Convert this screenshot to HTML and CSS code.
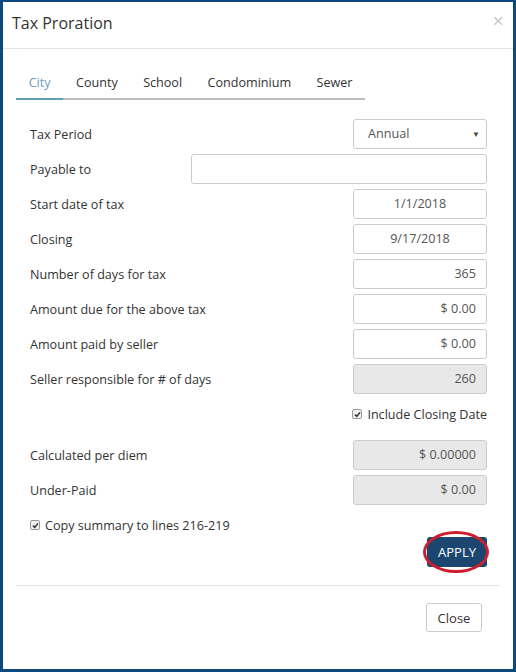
FILE: index.html
```html
<!DOCTYPE html>
<html lang="en">
<head>
    <meta charset="UTF-8">
    <title>Tax Proration</title>
    <link rel="stylesheet" href="styles.css">
</head>
<body>
    <div class="modal">
        <div class="modal-header">
            <h4 class="modal-title">Tax Proration</h4>
            <span class="close-x">&times;</span>
        </div>

        <div class="modal-body">
            <ul class="tabs">
                <li class="active">City</li>
                <li>County</li>
                <li>School</li>
                <li>Condominium</li>
                <li>Sewer</li>
            </ul>

            <div class="form">
                <div class="row">
                    <label>Tax Period</label>
                    <div class="field select"><span>Annual</span><span class="arrow">&#9660;</span></div>
                </div>
                <div class="row">
                    <label>Payable to</label>
                    <div class="field wide"></div>
                </div>
                <div class="row">
                    <label>Start date of tax</label>
                    <div class="field center">1/1/2018</div>
                </div>
                <div class="row">
                    <label>Closing</label>
                    <div class="field center">9/17/2018</div>
                </div>
                <div class="row">
                    <label>Number of days for tax</label>
                    <div class="field">365</div>
                </div>
                <div class="row">
                    <label>Amount due for the above tax</label>
                    <div class="field">$ 0.00</div>
                </div>
                <div class="row">
                    <label>Amount paid by seller</label>
                    <div class="field">$ 0.00</div>
                </div>
                <div class="row">
                    <label>Seller responsible for # of days</label>
                    <div class="field readonly">260</div>
                </div>

                <div class="check-row closing">
                    <span class="tick"><svg width="7" height="7" viewBox="0 0 7 7"><path d="M1 3.6 L2.8 5.4 L6 1.4" fill="none" stroke="#333" stroke-width="1.5"/></svg></span>
                    Include Closing Date
                </div>

                <div class="row">
                    <label>Calculated per diem</label>
                    <div class="field readonly">$ 0.00000</div>
                </div>
                <div class="row">
                    <label>Under-Paid</label>
                    <div class="field readonly">$ 0.00</div>
                </div>

                <div class="check-row copy">
                    <span class="tick"><svg width="7" height="7" viewBox="0 0 7 7"><path d="M1 3.6 L2.8 5.4 L6 1.4" fill="none" stroke="#333" stroke-width="1.5"/></svg></span>
                    Copy summary to lines 216-219
                </div>

                <div class="apply-row">
                    <button class="btn-apply">APPLY</button>
                </div>
            </div>

            <div class="modal-footer">
                <button class="btn-close">Close</button>
            </div>
        </div>
    </div>
</body>
</html>
```

FILE: styles.css
```css
/* tax proration dialog */
body {
    margin: 0;
    padding: 0;
    font-family: "Open Sans", Arial, sans-serif;
    font-size: 12.6px;
    color: #333;
    background: #fff;
}
.modal {
    box-sizing: border-box;
    width: 516px;
    height: 672px;
    border: 3px solid #0c4a7d;
    border-top-width: 2px;
    background: #fff;
}

.modal-header {
    height: 46px;
    padding: 0 9px 0 9px;
    display: flex;
    align-items: center;
    justify-content: space-between;
    border-bottom: 1px solid #e5e5e5;
}
.modal-title {
    margin: 0 0 4px 0;
    font-size: 16px;
    font-weight: 400;
    color: #333;
}
.close-x {
    font-size: 20px;
    color: #c8c8c8;
    line-height: 1;
    margin-top: -8px;
}

.modal-body {
    padding: 17px 13px 0 13px;
}

.tabs {
    list-style: none;
    margin: 0;
    padding: 0;
    display: inline-flex;
    border-bottom: 2px solid #bbb;
}
.tabs li {
    padding: 8px 12.7px 6px 12.7px;
    line-height: 18px;
    color: #333;
    margin-bottom: -2px;
    border-bottom: 2px solid transparent;
}
.tabs li.active {
    color: #6d9ac0;
    border-bottom-color: #5f9db5;
}

.form {
    padding: 19px 13px 0 14px;
}
.row {
    display: flex;
    align-items: center;
    justify-content: space-between;
    height: 30px;
    margin-bottom: 5px;
}
.field {
    box-sizing: border-box;
    width: 134px;
    height: 30px;
    border: 1px solid #ccc;
    border-radius: 3px;
    padding: 0 10px;
    line-height: 28px;
    text-align: right;
    color: #555;
    background: #fff;
}
.field.wide {
    width: 296px;
}
.field.center {
    text-align: center;
}
.field.readonly {
    background: #e8e8e8;
}
.select {
    display: flex;
    justify-content: space-between;
    text-align: left;
    padding: 0 6px 0 14px;
}
.select .arrow {
    font-size: 8px;
    color: #444;
}

.check-row {
    display: flex;
    align-items: center;
    height: 20px;
}
.check-row.closing {
    justify-content: flex-end;
    margin: 10px 0 16px 0;
}
.check-row.copy {
    margin: 10px 0 0 0;
}
.tick {
    box-sizing: border-box;
    width: 10px;
    height: 10px;
    border: 1px solid #999;
    border-radius: 2px;
    background: #f0f0f0;
    display: inline-flex;
    align-items: center;
    justify-content: center;
    margin-right: 5px;
}

.apply-row {
    display: flex;
    justify-content: flex-end;
    margin-top: 2px;
}
.btn-apply {
    position: relative;
    width: 60px;
    height: 30px;
    border: none;
    border-radius: 3px;
    background: #1b4670;
    color: #fff;
    font-family: "Open Sans", Arial, sans-serif;
    font-size: 13px;
    padding: 0;
}
/* red annotation ring around the button */
.btn-apply::after {
    content: "";
    position: absolute;
    left: -4px;
    top: -6px;
    width: 60px;
    height: 36px;
    border: 3px solid #cc1f2d;
    border-radius: 50%;
}

.modal-footer {
    margin-top: 18px;
    border-top: 1px solid #e5e5e5;
    padding: 17px 18px 0 0;
    display: flex;
    justify-content: flex-end;
}
.btn-close {
    width: 56px;
    height: 29px;
    background: #fff;
    border: 1px solid #ccc;
    border-radius: 3px;
    color: #333;
    font-family: "Open Sans", Arial, sans-serif;
    font-size: 13px;
    padding: 0;
}
```
